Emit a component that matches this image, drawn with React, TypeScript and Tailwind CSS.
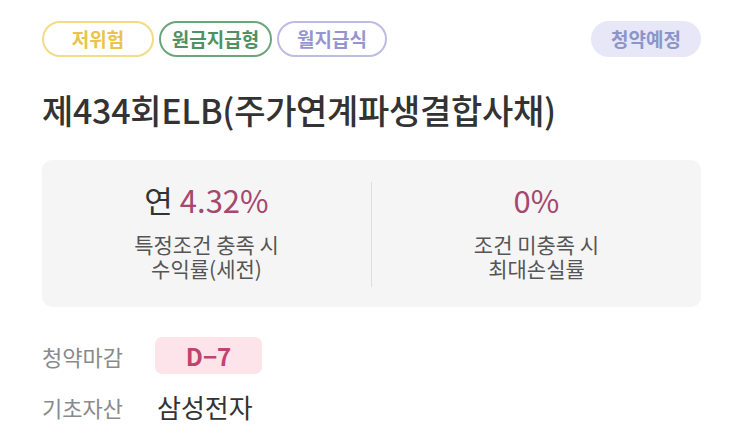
import React from "react";

const font = { fontFamily: '"Noto Sans CJK KR", "Noto Sans", sans-serif' };

function Tag({ label, className }: { label: string; className: string }) {
  return (
    <span
      className={`flex h-[36px] items-center justify-center rounded-full border-2 text-[19px] font-semibold ${className}`}
    >
      {label}
    </span>
  );
}

export default function App() {
  return (
    <div className="h-[441px] w-[743px] overflow-hidden bg-white px-[42px] pt-[21px]" style={font}>
      <div className="flex items-center">
        <div className="flex gap-[5px]">
          <Tag label="저위험" className="w-[112px] border-[#f2dc84] text-[#e9c44a]" />
          <Tag label="원금지급형" className="w-[113px] border-[#6ba67b] text-[#4f9163]" />
          <Tag label="월지급식" className="w-[110px] border-[#bcbce4] text-[#9494d2]" />
        </div>
        <span className="ml-auto flex h-[36px] w-[110px] items-center justify-center rounded-full bg-[#e7e7f7] text-[19px] font-semibold text-[#8b95c9]">
          청약예정
        </span>
      </div>

      <h1 className="mt-[31px] whitespace-nowrap text-[34px] font-medium leading-[44px] tracking-[-0.3px] text-[#333]">
        제434회ELB(주가연계파생결합사채)
      </h1>

      <div className="mt-[28px] flex h-[147px] items-start rounded-[10px] bg-[#f5f5f5] pt-[20px]">
        <div className="flex flex-1 flex-col items-center">
          <div className="text-[31px] leading-[40px] text-[#333]">
            연 <span className="text-[#a5486f]">4.32%</span>
          </div>
          <div className="mt-[12px] text-center text-[21px] leading-[24px] text-[#555]">
            특정조건 충족 시
            <br />
            수익률(세전)
          </div>
        </div>
        <div className="mt-[2px] h-[105px] w-px bg-[#dedede]" />
        <div className="flex flex-1 flex-col items-center">
          <div className="text-[31px] leading-[40px] text-[#a5486f]">0%</div>
          <div className="mt-[12px] text-center text-[21px] leading-[24px] text-[#555]">
            조건 미충족 시
            <br />
            최대손실률
          </div>
        </div>
      </div>

      <div className="mt-[30px] flex items-center">
        <span className="w-[113px] text-[22px] leading-[30px] text-[#8a8a8a]">청약마감</span>
        <span className="flex h-[37px] w-[107px] items-center justify-center rounded-[7px] bg-[#fce4ea] text-[24px] font-semibold text-[#c0446f]">
          D−7
        </span>
      </div>
      <div className="mt-[16px] flex items-center">
        <span className="w-[115px] text-[22px] leading-[34px] text-[#8a8a8a]">기초자산</span>
        <span className="text-[26px] leading-[34px] text-[#333]">삼성전자</span>
      </div>
    </div>
  );
}
